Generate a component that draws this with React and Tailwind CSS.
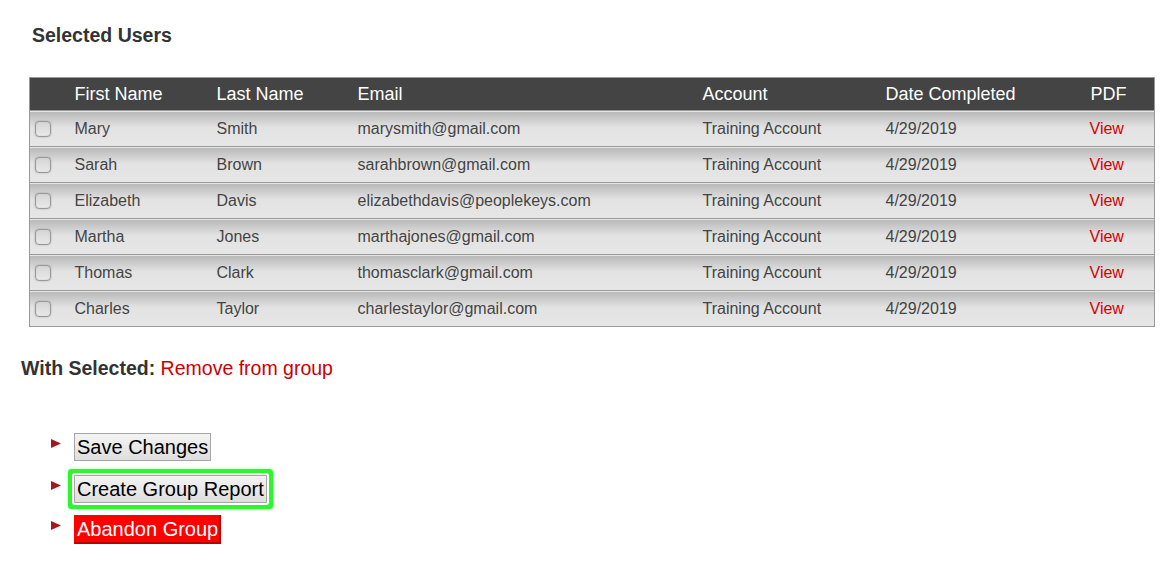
import React from 'react'

const users = [
    { first: 'Mary', last: 'Smith', email: 'marysmith@gmail.com' },
    { first: 'Sarah', last: 'Brown', email: 'sarahbrown@gmail.com' },
    { first: 'Elizabeth', last: 'Davis', email: 'elizabethdavis@peoplekeys.com' },
    { first: 'Martha', last: 'Jones', email: 'marthajones@gmail.com' },
    { first: 'Thomas', last: 'Clark', email: 'thomasclark@gmail.com' },
    { first: 'Charles', last: 'Taylor', email: 'charlestaylor@gmail.com' },
]

function Bullet() {
    return (
        <svg width="10" height="9" viewBox="0 0 10 9" className="shrink-0">
            <polygon points="0,0 10,4.5 0,9" fill="#a8161b" />
        </svg>
    )
}

export default function App() {
    return (
        <div className="min-h-[570px] bg-white text-[#333] font-['Liberation_Sans',Arial,sans-serif]">
            <h2 className="ml-[32px] pt-[23px] text-[19.5px] leading-[24px] font-bold text-[#333]">Selected Users</h2>

            {/* table start */}
            <table className="ml-[29px] mt-[30px] w-[1125px] table-fixed border-collapse border border-[#999]">
                <colgroup>
                    <col className="w-[38px]" />
                    <col className="w-[142px]" />
                    <col className="w-[141px]" />
                    <col className="w-[345px]" />
                    <col className="w-[183px]" />
                    <col className="w-[205px]" />
                    <col className="w-[71px]" />
                </colgroup>
                <thead>
                    <tr className="bg-[#444] text-white text-left text-[18px] font-normal">
                        <th className="h-[33px] p-0"></th>
                        <th className="pl-[7px] font-normal">First Name</th>
                        <th className="pl-[7px] font-normal">Last Name</th>
                        <th className="pl-[7px] font-normal">Email</th>
                        <th className="pl-[7px] font-normal">Account</th>
                        <th className="pl-[7px] font-normal">Date Completed</th>
                        <th className="pl-[7px] font-normal">PDF</th>
                    </tr>
                </thead>
                <tbody>
                    {users.map((user, index) => (
                        <tr key={index} className="border-t border-[#999] bg-[linear-gradient(to_bottom,#b9b9b9,#e3e3e3_45%,#e6e6e6)] text-[16px] text-[#444]">
                            <td className="h-[36px] pl-[5px] pt-[1px]">
                                <input type="checkbox" className="block appearance-none w-[16px] h-[16px] rounded-[4px] border border-[#9a9a9a] bg-[linear-gradient(to_bottom,#d6d6d6,#e8e8e8)] shadow-[0_0_1.5px_rgba(0,0,0,0.35),inset_0_0_1px_rgba(0,0,0,0.2)]" />
                            </td>
                            <td className="pl-[7px]">{user.first}</td>
                            <td className="pl-[7px]">{user.last}</td>
                            <td className="pl-[7px]">{user.email}</td>
                            <td className="pl-[7px]">Training Account</td>
                            <td className="pl-[7px]">4/29/2019</td>
                            <td className="pl-[6px]"><a href="#" className="text-[#d40000]">View</a></td>
                        </tr>
                    ))}
                </tbody>
            </table>
            {/* table end */}

            <p className="ml-[21px] mt-[29px] text-[19.5px] leading-[24px]">
                <span className="font-bold text-[#333]">With Selected:</span>{' '}
                <a href="#" className="text-[#cc0000]">Remove from group</a>
            </p>

            <ul className="ml-[51px] mt-[53px] flex flex-col">
                <li className="flex items-start gap-[13px]">
                    <span className="mt-[6px]"><Bullet /></span>
                    <button className="px-[2px] py-[2px] text-[20px] leading-[22px] text-black border border-[#a6a6a6] bg-[linear-gradient(to_bottom,#f4f4f4,#dedede)]">Save Changes</button>
                </li>
                <li className="mt-[14px] flex items-start gap-[13px]">
                    <span className="mt-[6px]"><Bullet /></span>
                    <button className="px-[2px] py-[2px] text-[20px] leading-[22px] text-black border border-[#a6a6a6] bg-[linear-gradient(to_bottom,#f4f4f4,#dedede)] rounded-[1px] shadow-[0_0_0_2px_#ffffff,0_0_0_6px_#2ef52e,0_0_3px_6px_rgba(46,245,46,0.5)]">Create Group Report</button>
                </li>
                <li className="mt-[12px] flex items-start gap-[13px]">
                    <span className="mt-[6px]"><Bullet /></span>
                    <button className="pl-[3px] pr-[1px] pt-[2px] pb-[1px] text-[20px] leading-[24px] text-white bg-[#ff0000] border-r-2 border-b-2 border-[#b80000]">Abandon Group</button>
                </li>
            </ul>
        </div>
    )
}
